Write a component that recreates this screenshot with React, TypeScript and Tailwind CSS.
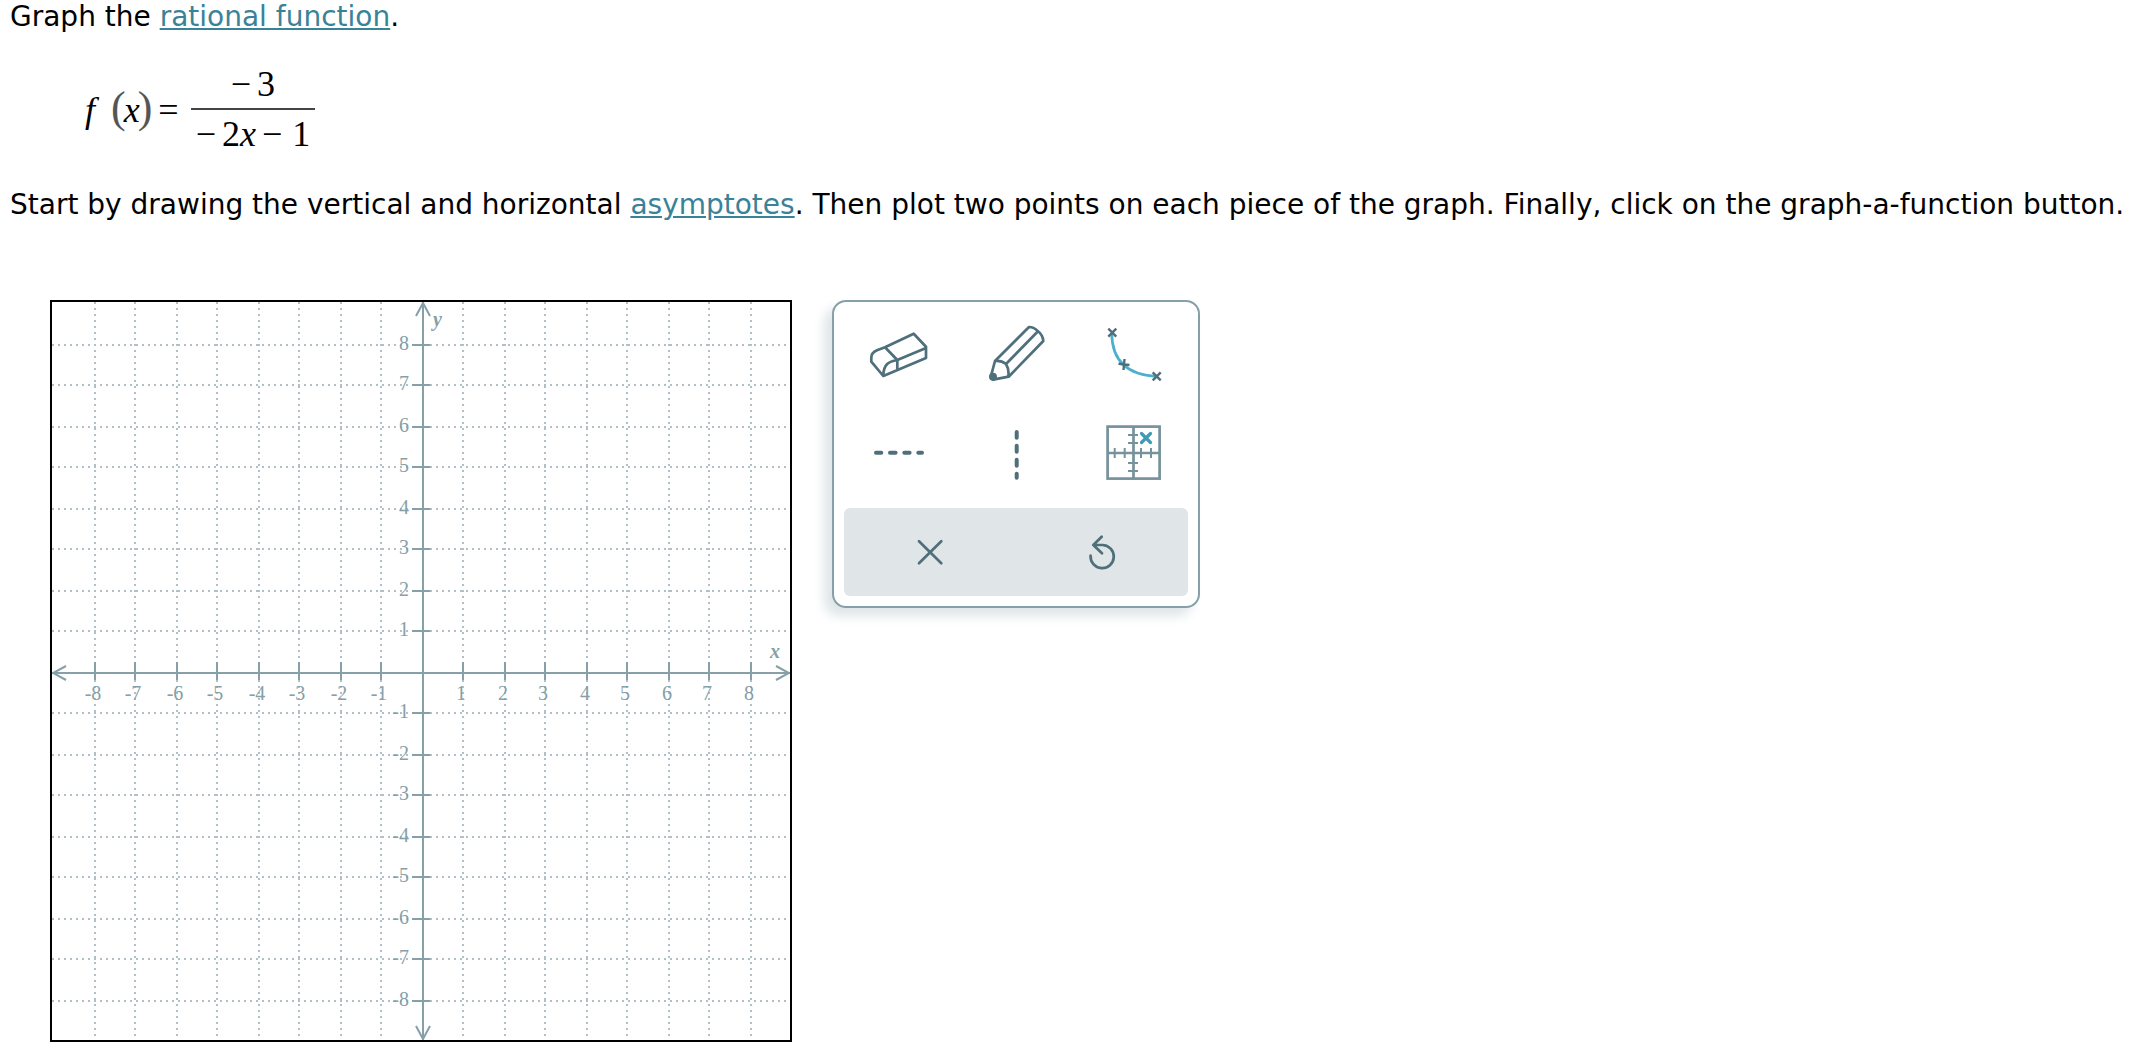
import type { ReactNode } from 'react';

const TICKS = [-8, -7, -6, -5, -4, -3, -2, -1, 1, 2, 3, 4, 5, 6, 7, 8];
const CENTER = 371;
const SIZE = 738;

const gridPos = (n: number) => CENTER + 41 * n - (n % 2 === 0 ? 0 : 1);

function Graph() {
  return (
    <div className="shrink-0 border-2 border-black bg-white">
      <svg
        width={SIZE}
        height={SIZE}
        viewBox="0 0 738 738"
        className="block font-['Liberation_Serif',serif]"
        role="img"
        aria-label="Coordinate plane"
      >
        <g stroke="#b0c0c6" strokeWidth="2" strokeDasharray="2 4">
          {TICKS.map((n) => (
            <g key={n}>
              <path d={`M${gridPos(n)} 0V${SIZE}`} />
              <path d={`M0 ${gridPos(n)}H${SIZE}`} />
            </g>
          ))}
        </g>

        <g stroke="#869fa8" strokeWidth="2" fill="none">
          <path d="M371 0V738M0 371H738" />
          <path d="M364 14L371 1L378 14M364 724L371 737L378 724" />
          <path d="M14 364L1 371L14 378M724 364L737 371L724 378" />
          {TICKS.map((n) => (
            <path key={n} d={`M${gridPos(n)} 360V378M360 ${gridPos(n)}H378`} />
          ))}
        </g>

        <g fill="#869fa8" fontSize="20">
          {TICKS.map((n) => (
            <g key={n}>
              <text x={gridPos(n) - 2} y="398" textAnchor="middle">{n}</text>
              <text x="357" y={gridPos(-n) + 5} textAnchor="end">{n}</text>
            </g>
          ))}
          <text x="381" y="24" fontWeight="bold" fontStyle="italic">y</text>
          <text x="718" y="356" fontWeight="bold" fontStyle="italic">x</text>
        </g>
      </svg>
    </div>
  );
}

function ToolButton({ label, children }: { label: string; children: ReactNode }) {
  return (
    <button type="button" aria-label={label} className="flex h-[98px] items-center justify-center cursor-pointer">
      <svg
        width="60"
        height="60"
        viewBox="0 0 60 60"
        fill="none"
        stroke="#4f6f7b"
        strokeWidth="2.7"
        strokeLinejoin="round"
      >
        {children}
      </svg>
    </button>
  );
}

function Toolbox() {
  return (
    <div className="w-92 shrink-0 rounded-[14px] border-2 border-[#869fa8] bg-white pt-1 pb-[10px] shadow-[-8px_8px_12px_#dfe5e8]">
      <div className="grid grid-cols-3 px-[5px]">
        <ToolButton label="Eraser">
          <path d="M17 22.3L45.7 8.7L58 21.7V33L15.3 51L3.3 36.7V33C3.3 29 6 26.5 9 25.3Z" />
          <path d="M17 22.3L29.3 35V44.3M58 23L29.3 35C21 36.5 15.3 39 15.3 51" />
        </ToolButton>
        <ToolButton label="Pencil">
          <path d="M9 36L43 2C47 2 50 4 52 6.3C55.5 9 57 12 57.3 16L22.7 51.7L7 54.7L4.7 52Z" />
          <path d="M9 36C14 35.3 17.5 37 20 39C22.5 43 23 47 22.3 51.7M20 39L52 6.3" />
          <circle cx="7" cy="51.7" r="4" fill="#4f6f7b" stroke="none" />
        </ToolButton>
        <ToolButton label="Graph a function">
          <path d="M7.7 8C8 35 22 50 52.7 51.3" stroke="#4dafce" />
          <path
            d="M4.3 3.7L12.3 11.7M12.3 3.7L4.3 11.7M14.5 38.7L25.5 40M20.5 34L19.5 45M48.7 47.3L56.7 55.3M56.7 47.3L48.7 55.3"
            strokeWidth="2.4"
          />
        </ToolButton>
        <ToolButton label="Horizontal asymptote">
          <path d="M8 29.7H13.3M22 29.7H27.6M36.3 29.7H41.6M50.3 29.7H54" strokeWidth="4" strokeLinecap="round" />
        </ToolButton>
        <ToolButton label="Vertical asymptote">
          <path d="M30.7 9V14.7M30.7 22.7V28.7M30.7 36.7V42.7M30.7 50.7V54.7" strokeWidth="4" strokeLinecap="round" />
        </ToolButton>
        <ToolButton label="Plot a point">
          <g stroke="#76929b">
            <rect x="3.6" y="3.6" width="52" height="52" strokeLinejoin="miter" />
            <path d="M29.5 3V56M3 30H56" />
            <path
              d="M24 12H34M24 20H34M24 40H34M24 48H34M10.7 25V35M20.7 25V35M37 25V35M47 25V35"
              strokeWidth="2"
            />
          </g>
          <path d="M37.5 10.5L46.5 19.5M46.5 10.5L37.5 19.5" stroke="#3f9ab5" strokeWidth="3.2" strokeLinecap="round" />
        </ToolButton>
      </div>

      <div className="mx-[10px] mt-[6px] grid h-22 grid-cols-2 rounded-md bg-[#e0e5e7]">
        <button type="button" aria-label="Clear" className="flex items-center justify-center cursor-pointer">
          <svg width="40" height="40" viewBox="0 0 40 40" fill="none" stroke="#4f6f7b" strokeWidth="2.7" strokeLinecap="round">
            <path d="M9 9.3L31.3 31.3M31.3 9.3L9 31.3" />
          </svg>
        </button>
        <button type="button" aria-label="Undo" className="flex items-center justify-center cursor-pointer">
          <svg
            width="40"
            height="40"
            viewBox="0 0 40 40"
            fill="none"
            stroke="#4f6f7b"
            strokeWidth="2.7"
            strokeLinecap="round"
            strokeLinejoin="round"
          >
            <path d="M19.7 4.7L11.3 13L20 21.3M11.3 13H20.5A11.6 11.6 0 1 1 8.6 23.7" />
          </svg>
        </button>
      </div>
    </div>
  );
}

function Formula() {
  return (
    <div className="flex items-center gap-3 pl-[75px] font-['Liberation_Serif',serif] text-[36px] leading-9">
      <div className="flex items-baseline">
        <i className="mr-4">f</i>
        <span className="text-[44px] leading-9 text-[#555]">(</span>
        <i className="-mx-[2px]">x</i>
        <span className="mr-[6px] text-[44px] leading-9 text-[#555]">)</span>
        <span>=</span>
      </div>
      <div className="flex flex-col">
        <div className="flex justify-center gap-[6px] border-b-2 border-[#444] pb-[6px]">
          <span>−</span>
          <span>3</span>
        </div>
        <div className="flex gap-[6px] px-[5px] pt-[6px]">
          <span>−</span>
          <span>2<i>x</i></span>
          <span>−</span>
          <span className="pl-1">1</span>
        </div>
      </div>
    </div>
  );
}

export default function App() {
  return (
    <main className="bg-white pl-[10px] font-['DejaVu_Sans',sans-serif] text-[28px] leading-[34px] text-black">
      <p>
        Graph the{' '}
        <a href="#rational-function" className="text-[#3a8297] underline">rational function</a>.
      </p>

      <div className="pt-8 pb-9">
        <Formula />
      </div>

      <p>
        Start by drawing the vertical and horizontal{' '}
        <a href="#asymptotes" className="text-[#3a8297] underline">asymptotes</a>. Then plot two points on each
        piece of the graph. Finally, click on the graph-a-function button.
      </p>

      <div className="flex items-start gap-10 pt-[78px] pl-10">
        <Graph />
        <Toolbox />
      </div>
    </main>
  );
}
